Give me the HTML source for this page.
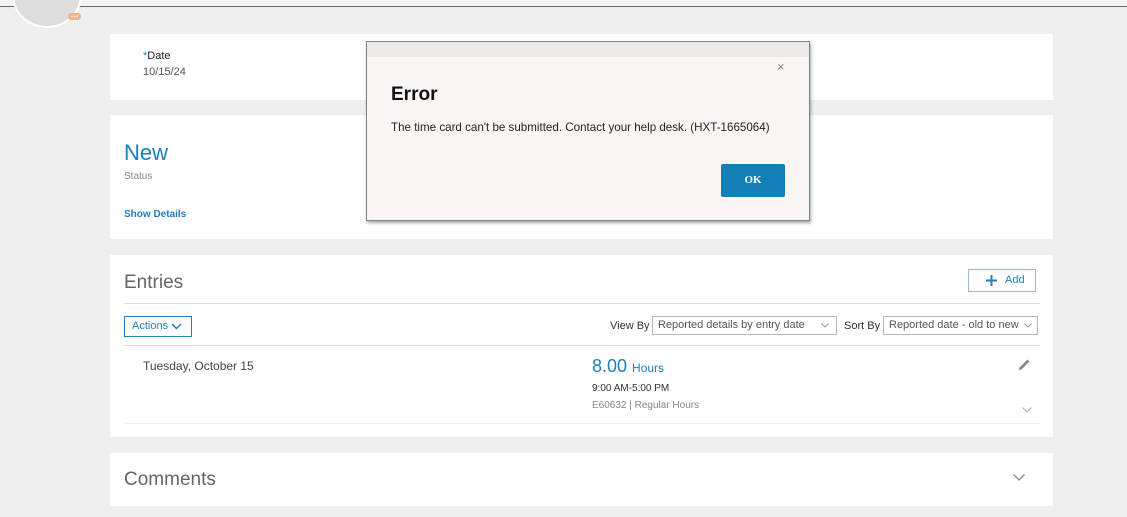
<!DOCTYPE html>
<html><head><style>
body{margin:0;width:1127px;height:517px;background:#efefef;font-family:"Liberation Sans",sans-serif;position:relative;overflow:hidden}
.a{position:absolute}
.p{position:absolute;left:110px;width:943px;background:#fff}
.blue{color:#1e7fbe}
.sel{position:absolute;height:19px;border:1px solid #b6b6b6;font-size:11px;color:#555;line-height:17px;padding-left:5px;box-sizing:border-box;background:#fff}
.sel svg{position:absolute;right:7px;top:6px}
</style></head><body>
<div class="a" style="left:0;top:0;width:1127px;height:6px;background:#f5f3f1"></div>
<div class="a" style="left:0;top:6px;width:1127px;height:1px;background:#5a6a80"></div>
<div class="a" style="left:12px;top:-38px;width:66px;height:62px;border-radius:50%;background:#ddd;border:2px solid #fff"></div>
<div class="a" style="left:68px;top:13px;width:13px;height:7px;border-radius:3px;background:#f3b48a"><svg width="13" height="7" style="position:absolute;left:0;top:0"><circle cx="4" cy="3.5" r=".7" fill="#fff"/><circle cx="6.5" cy="3.5" r=".7" fill="#fff"/><circle cx="9" cy="3.5" r=".7" fill="#fff"/></svg></div>

<div class="p" style="top:34px;height:66px">
<div class="a" style="left:33px;top:16px;font-size:11px;color:#222"><span class="blue">*</span>Date</div>
<div class="a" style="left:33px;top:32px;font-size:11px;color:#555">10/15/24</div>
</div>
<div class="p" style="top:115px;height:124px">
<div class="a blue" style="left:14px;top:25px;font-size:22px;font-weight:300">New</div>
<div class="a" style="left:14px;top:56px;font-size:10px;color:#888">Status</div>
<div class="a blue" style="left:14px;top:94px;font-size:10px;font-weight:bold">Show Details</div>
</div>
<div class="p" style="top:255px;height:182px">
<div class="a" style="left:14px;top:17px;font-size:19px;color:#666">Entries</div>
<div class="a" style="left:858px;top:14px;width:68px;height:23px;border:1px solid #9bb9cc;box-sizing:border-box;font-size:11px;line-height:21px"><svg width="11" height="11" style="position:absolute;left:17px;top:5px"><path d="M5.5 0V11M0 5.5H11" stroke="#1e7fbe" stroke-width="2"/></svg><span style="color:#1e7fbe;position:absolute;left:36px">Add</span></div>
<div class="a" style="left:14px;top:48px;width:916px;height:1px;background:#ddd"></div>
<div class="a" style="left:14px;top:61px;width:68px;height:21px;border:1px solid #2a7fb5;box-sizing:border-box;font-size:11px;color:#1e7fbe;line-height:19px;padding-left:7px">Actions<svg width="11" height="7" style="position:absolute;left:46px;top:6px"><path d="M1 1L5.5 5.5L10 1" stroke="#1e7fbe" stroke-width="1.5" fill="none"/></svg></div>
<div class="a" style="left:500px;top:65px;font-size:11px;color:#333">View By</div>
<div class="sel" style="left:542px;top:61px;width:185px">Reported details by entry date<svg width="8" height="5"><path d="M.5 .5L4 4L7.5 .5" stroke="#999" fill="none"/></svg></div>
<div class="a" style="left:734px;top:65px;font-size:11px;color:#333">Sort By</div>
<div class="sel" style="left:773px;top:61px;width:155px">Reported date - old to new<svg width="8" height="5" style="right:5px"><path d="M.5 .5L4 4L7.5 .5" stroke="#999" fill="none"/></svg></div>
<div class="a" style="left:14px;top:90px;width:916px;height:1px;background:#ddd"></div>
<div class="a" style="left:33px;top:104px;font-size:12px;color:#444">Tuesday, October 15</div>
<div class="a blue" style="left:482px;top:101px;font-size:18px">8.00 <span style="font-size:12px">Hours</span></div>
<div class="a" style="left:482px;top:128px;font-size:10px;color:#333">9:00 AM-5:00 PM</div>
<div class="a" style="left:482px;top:145px;font-size:10px;color:#888">E60632 | Regular Hours</div>
<svg class="a" style="left:908px;top:103px" width="13" height="13"><path d="M1 12L1.5 9.5L9.5 1.5L11.5 3.5L3.5 11.5Z" fill="#888"/></svg>
<svg class="a" style="left:912px;top:152px" width="10" height="6"><path d="M.5 .5L5 5L9.5 .5" stroke="#aaa" fill="none"/></svg>
<div class="a" style="left:14px;top:168px;width:916px;height:1px;background:#f0f0f0"></div>
</div>
<div class="p" style="top:453px;height:53px">
<div class="a" style="left:14px;top:16px;font-size:19px;color:#666">Comments</div>
<svg class="a" style="left:903px;top:21px" width="12" height="7"><path d="M.5 .5L6 6L11.5 .5" stroke="#888" stroke-width="1.3" fill="none"/></svg>
</div>

<div class="a" style="left:366px;top:41px;width:444px;height:180px;background:#f8f7f5;border:1px solid #7a8594;box-shadow:1px 2px 3px rgba(0,0,0,.35);box-sizing:border-box">
<div class="a" style="left:0;top:0;width:442px;height:15px;background:#eceae8"></div>
<div class="a" style="left:410px;top:17px;color:#888;font-size:13px">×</div>
<div class="a" style="left:24px;top:42px;font-size:19px;font-weight:bold;color:#111">Error</div>
<div class="a" style="left:24px;top:79px;font-size:11.6px;color:#222">The time card can't be submitted. Contact your help desk. (HXT-1665064)</div>
<div class="a" style="left:354px;top:122px;width:64px;height:33px;background:#127fb7;border-radius:2px;color:#fff;font-family:'Liberation Serif',serif;font-size:11px;font-weight:bold;line-height:33px;text-align:center">OK</div>
</div>
</body></html>
